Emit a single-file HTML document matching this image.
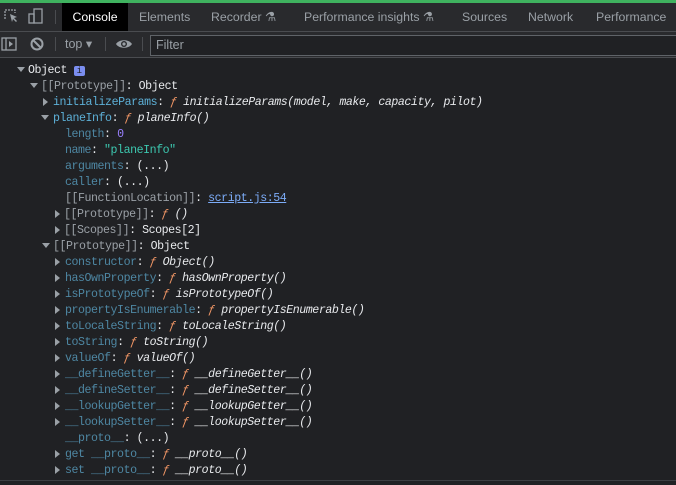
<!DOCTYPE html><html><head><meta charset="utf-8"><style>
body{margin:0;width:676px;height:485px;background:#202124;overflow:hidden;font-family:"Liberation Sans",sans-serif;position:relative}
.g{position:absolute;left:0;top:0;width:676px;height:3px;background:#3fb25f}
.tb{position:absolute;left:0;top:3px;width:676px;height:28px;background:#292a2d;border-bottom:1px solid #4a4c50}
.tab{position:absolute;top:3px;height:28px;line-height:28px;font-size:12.3px;color:#9aa0a6}
.con{left:62px;width:66px;background:#000;color:#fff;text-align:center}
.t2{position:absolute;left:0;top:32px;width:676px;height:25px;background:#292a2d;border-bottom:1px solid #4a4c50}
.flt{position:absolute;left:150px;top:35px;width:530px;border:1px solid #5f6368;background:#202124;color:#9aa0a6;font-size:12.5px;line-height:19px;padding-left:5px;box-sizing:border-box;height:21px}
.sep{position:absolute;width:1px;background:#4a4c50}
.m{position:absolute;font-family:"Liberation Mono",monospace;font-size:11.6px;letter-spacing:-0.45px;line-height:16px;white-space:pre;color:#e8eaed}
.k{color:#5db0d7}.d{color:#4e87a3}.b{color:#9aa0a6}.f{color:#f29766;font-style:italic}.i{font-style:italic;color:#e8eaed}.n{color:#9980ff}.s{color:#3cc8b0}.l{color:#7cacf8;text-decoration:underline}
.a{position:absolute;width:0;height:0}
.r{border-left:5px solid #9aa0a6;border-top:4px solid transparent;border-bottom:4px solid transparent}
.dn{border-top:5px solid #9aa0a6;border-left:4px solid transparent;border-right:4px solid transparent}
.bot{position:absolute;left:0;top:480px;width:676px;height:1px;background:#3c3e42}
</style></head><body>
<div class="g"></div><div class="tb"></div>
<svg style="position:absolute;left:4px;top:9px" width="14" height="14" viewBox="0 0 14 14"><path d="M1 10V1h10v3" fill="none" stroke="#9aa0a6" stroke-width="1.3" stroke-dasharray="2 1"/><path d="M6 5l7 3-3 1 3 3-1 1-3-3-1 3z" fill="#9aa0a6"/></svg>
<svg style="position:absolute;left:28px;top:8px" width="16" height="16" viewBox="0 0 16 16"><rect x="6" y="1" width="8" height="14" fill="none" stroke="#9aa0a6" stroke-width="1.3"/><rect x="1" y="6" width="5" height="9" fill="none" stroke="#9aa0a6" stroke-width="1.3"/></svg>
<div class="sep" style="left:55px;top:10px;height:14px"></div>
<div class="tab con">Console</div>
<div class="tab" style="left:139px">Elements</div>
<div class="tab" style="left:211px">Recorder ⚗</div>
<div class="tab" style="left:304px">Performance insights ⚗</div>
<div class="tab" style="left:462px">Sources</div>
<div class="tab" style="left:528px">Network</div>
<div class="tab" style="left:596px">Performance</div>
<div class="t2"></div>
<svg style="position:absolute;left:1px;top:37px" width="16" height="14" viewBox="0 0 16 14"><rect x="1" y="1" width="14" height="12" fill="none" stroke="#9aa0a6" stroke-width="1.3"/><line x1="5" y1="1" x2="5" y2="13" stroke="#9aa0a6" stroke-width="1.3"/><path d="M8 4l4 3-4 3z" fill="#9aa0a6"/></svg>
<svg style="position:absolute;left:30px;top:37px" width="14" height="14" viewBox="0 0 14 14"><circle cx="7" cy="7" r="5.5" fill="none" stroke="#9aa0a6" stroke-width="2"/><line x1="3" y1="3" x2="11" y2="11" stroke="#9aa0a6" stroke-width="2"/></svg>
<div class="sep" style="left:55px;top:37px;height:14px"></div>
<div class="tab" style="left:65px;top:31px;line-height:27px;font-size:12.5px">top ▾</div>
<div class="sep" style="left:105px;top:37px;height:14px"></div>
<svg style="position:absolute;left:115px;top:38px" width="18" height="12" viewBox="0 0 18 12"><path d="M1 6C4 1 14 1 17 6C14 11 4 11 1 6z" fill="#9aa0a6"/><circle cx="9" cy="6" r="3" fill="#292a2d"/><circle cx="9" cy="6" r="1.6" fill="#9aa0a6"/></svg>
<div class="sep" style="left:142px;top:37px;height:14px"></div>
<div class="flt">Filter</div>

<div class="a dn" style="left:17px;top:67px"></div><div class="m" style="left:28px;top:63px">Object <span style="background:#7b8ef0;color:#202124;font-size:9px;border-radius:2px;padding:0 3px">i</span></div>
<div class="a dn" style="left:30px;top:83px"></div><div class="m" style="left:41px;top:79px"><span class="b">[[Prototype]]</span>: Object</div>
<div class="a r" style="left:43px;top:98px"></div><div class="m" style="left:53px;top:95px"><span class="k">initializeParams</span>: <span class="f">ƒ</span> <span class="i">initializeParams(model, make, capacity, pilot)</span></div>
<div class="a dn" style="left:41px;top:115px"></div><div class="m" style="left:53px;top:111px"><span class="k">planeInfo</span>: <span class="f">ƒ</span> <span class="i">planeInfo()</span></div>
<div class="m" style="left:65px;top:127px"><span class="d">length</span>: <span class="n">0</span></div>
<div class="m" style="left:65px;top:143px"><span class="d">name</span>: <span class="s">"planeInfo"</span></div>
<div class="m" style="left:65px;top:159px"><span class="d">arguments</span>: (...)</div>
<div class="m" style="left:65px;top:175px"><span class="d">caller</span>: (...)</div>
<div class="m" style="left:65px;top:191px"><span class="b">[[FunctionLocation]]</span>: <span class="l">script.js:54</span></div>
<div class="a r" style="left:55px;top:210px"></div><div class="m" style="left:64px;top:207px"><span class="b">[[Prototype]]</span>: <span class="f">ƒ</span> <span class="i">()</span></div>
<div class="a r" style="left:55px;top:226px"></div><div class="m" style="left:64px;top:223px"><span class="b">[[Scopes]]</span>: Scopes[2]</div>
<div class="a dn" style="left:42px;top:243px"></div><div class="m" style="left:53px;top:239px"><span class="b">[[Prototype]]</span>: Object</div>
<div class="a r" style="left:55px;top:258px"></div><div class="m" style="left:65px;top:255px"><span class="d">constructor</span>: <span class="f">ƒ</span> <span class="i">Object()</span></div>
<div class="a r" style="left:55px;top:274px"></div><div class="m" style="left:65px;top:271px"><span class="d">hasOwnProperty</span>: <span class="f">ƒ</span> <span class="i">hasOwnProperty()</span></div>
<div class="a r" style="left:55px;top:290px"></div><div class="m" style="left:65px;top:287px"><span class="d">isPrototypeOf</span>: <span class="f">ƒ</span> <span class="i">isPrototypeOf()</span></div>
<div class="a r" style="left:55px;top:306px"></div><div class="m" style="left:65px;top:303px"><span class="d">propertyIsEnumerable</span>: <span class="f">ƒ</span> <span class="i">propertyIsEnumerable()</span></div>
<div class="a r" style="left:55px;top:322px"></div><div class="m" style="left:65px;top:319px"><span class="d">toLocaleString</span>: <span class="f">ƒ</span> <span class="i">toLocaleString()</span></div>
<div class="a r" style="left:55px;top:338px"></div><div class="m" style="left:65px;top:335px"><span class="d">toString</span>: <span class="f">ƒ</span> <span class="i">toString()</span></div>
<div class="a r" style="left:55px;top:354px"></div><div class="m" style="left:65px;top:351px"><span class="d">valueOf</span>: <span class="f">ƒ</span> <span class="i">valueOf()</span></div>
<div class="a r" style="left:55px;top:370px"></div><div class="m" style="left:65px;top:367px"><span class="d">__defineGetter__</span>: <span class="f">ƒ</span> <span class="i">__defineGetter__()</span></div>
<div class="a r" style="left:55px;top:386px"></div><div class="m" style="left:65px;top:383px"><span class="d">__defineSetter__</span>: <span class="f">ƒ</span> <span class="i">__defineSetter__()</span></div>
<div class="a r" style="left:55px;top:402px"></div><div class="m" style="left:65px;top:399px"><span class="d">__lookupGetter__</span>: <span class="f">ƒ</span> <span class="i">__lookupGetter__()</span></div>
<div class="a r" style="left:55px;top:418px"></div><div class="m" style="left:65px;top:415px"><span class="d">__lookupSetter__</span>: <span class="f">ƒ</span> <span class="i">__lookupSetter__()</span></div>
<div class="m" style="left:65px;top:431px"><span class="d">__proto__</span>: (...)</div>
<div class="a r" style="left:55px;top:450px"></div><div class="m" style="left:65px;top:447px"><span class="d">get __proto__</span>: <span class="f">ƒ</span> <span class="i">__proto__()</span></div>
<div class="a r" style="left:55px;top:466px"></div><div class="m" style="left:65px;top:463px"><span class="d">set __proto__</span>: <span class="f">ƒ</span> <span class="i">__proto__()</span></div>
<div class="bot"></div>
</body></html>
